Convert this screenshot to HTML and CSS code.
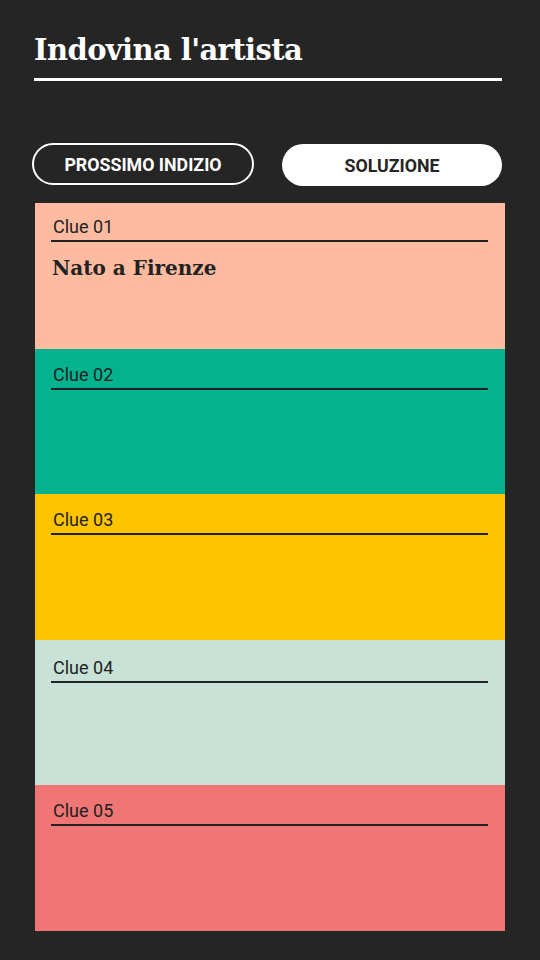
FILE: index.html
```html
<!DOCTYPE html>
<html lang="it">
<head>
<meta charset="utf-8">
<title>Indovina l'artista</title>
<link rel="stylesheet" href="styles.css">
</head>
<body>
<header class="header">
  <h1 class="title">Indovina l'artista</h1>
</header>
<div class="actions">
  <button class="btn btn-outline">PROSSIMO INDIZIO</button>
  <button class="btn btn-solid">SOLUZIONE</button>
</div>
<main class="clues">
  <section class="clue clue-1">
    <div class="clue-label">Clue 01</div>
    <p class="clue-text">Nato a Firenze</p>
  </section>
  <section class="clue clue-2">
    <div class="clue-label">Clue 02</div>
  </section>
  <section class="clue clue-3">
    <div class="clue-label">Clue 03</div>
  </section>
  <section class="clue clue-4">
    <div class="clue-label">Clue 04</div>
  </section>
  <section class="clue clue-5">
    <div class="clue-label">Clue 05</div>
  </section>
</main>
</body>
</html>
```
FILE: styles.css
```css
* { box-sizing: border-box; }
html, body { margin: 0; padding: 0; }
body {
  background: #252525;
  width: 540px;
  height: 960px;
  overflow: hidden;
  font-family: Roboto, "Liberation Sans", sans-serif;
  color: #222;
}
.header {
  padding: 30px 38px 0 34px;
}
.title {
  margin: 0;
  font-family: "DejaVu Serif", "Liberation Serif", serif;
  font-weight: bold;
  font-size: 29px;
  line-height: 40px;
  color: #fff;
  letter-spacing: -0.6px;
  padding-bottom: 8px;
  border-bottom: 3px solid #fff;
}
.actions {
  display: flex;
  gap: 28px;
  padding: 62px 38px 0 32px;
}
.btn {
  flex: 0 0 auto;
  height: 42px;
  border-radius: 21px;
  font-family: Roboto, "Liberation Sans", sans-serif;
  font-weight: bold;
  font-size: 17.8px;
  cursor: pointer;
  padding: 0;
}
.btn-outline {
  width: 222px;
  background: transparent;
  color: #fff;
  border: 2px solid #fff;
}
.btn-solid {
  width: 220px;
  background: #fff;
  color: #252525;
  border: none;
  margin-top: 1px;
}
.clues {
  margin: 17px 35px 0 35px;
  display: flex;
  flex-direction: column;
}
.clue {
  height: 145.6px;
  padding: 13px 17px 0 16px;
}
.clue-label {
  font-size: 18px;
  line-height: 22px;
  padding: 0 0 2px 2px;
  border-bottom: 2px solid #222;
}
.clue-text {
  margin: 13px 0 0 1px;
  font-family: "DejaVu Serif", "Liberation Serif", serif;
  font-weight: bold;
  font-size: 20px;
  line-height: 26px;
}
.clue-1 { background: #ffbba0; }
.clue-2 { background: #03b38f; padding-top: 15px; }
.clue-3 { background: #ffc400; padding-top: 15px; }
.clue-4 { background: #c8e2d7; padding-top: 17px; }
.clue-5 { background: #f07575; padding-top: 15px; }
```
